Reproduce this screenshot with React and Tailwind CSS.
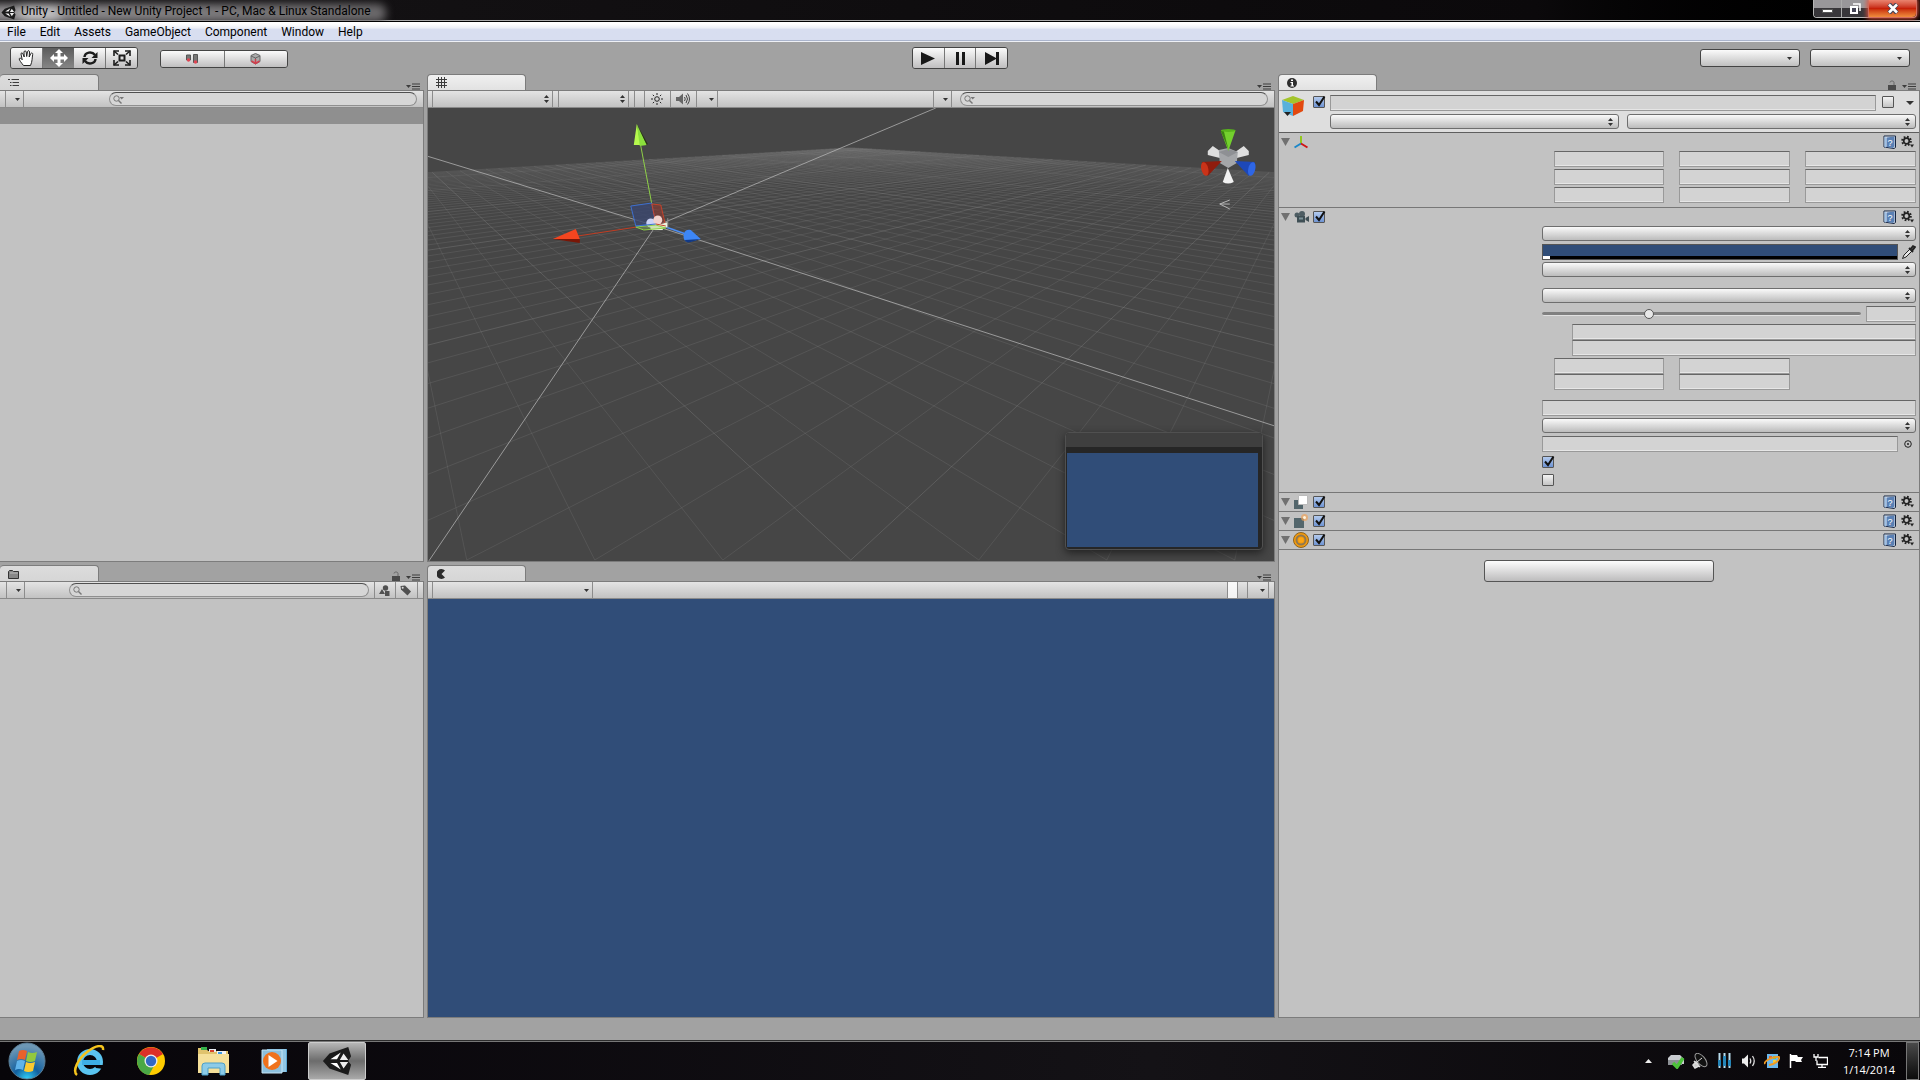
import clsx from "clsx";

const menus = ["File", "Edit", "Assets", "GameObject", "Component", "Window", "Help"];

const dark = "#3c3c3c";

// perspective grid: both families of lines meet on the horizon
const CENTER = 851;
const HORIZON = 120;
const SPREAD = 475;
const FRONT = 560;
const CELL = 128;
const EDGE = 55;

function gridLines() {
  const edgeSlope = (FRONT - HORIZON) / (SPREAD + CELL * EDGE);
  const lines = [];
  for (let k = -3; k <= EDGE; k++) {
    const run = SPREAD + CELL * k;
    const slope = (FRONT - HORIZON) / run;
    // start of the line, on the far edge of the opposite family
    const t = (edgeSlope * 2 * SPREAD) / (slope + edgeSlope);
    lines.push({
      k,
      x1: -SPREAD + t,
      y1: HORIZON + slope * t,
      x2: -SPREAD + run,
      y2: FRONT,
    });
  }
  return lines;
}

function UnityLogo({ size, className }) {
  return (
    <svg width={size} height={size} viewBox="0 0 32 32" className={className} aria-hidden="true">
      <path d="M28 1 8 8 1 16l7 8 20 7 3-11-3-4 3-5z" fill="#1b1b1b" />
      <path d="M9 14 20 7l-4 7z M9 18l11 7-4-7z" fill="#fff" />
      <path d="m23 8-4 7h9z M23 24l-4-7h9z" fill="#eee" />
    </svg>
  );
}

function Caret({ className }) {
  return (
    <svg width="5" height="3" viewBox="0 0 5 3" className={className} aria-hidden="true">
      <path d="M0 0h5L2.500 3z" fill="#333" />
    </svg>
  );
}

function UpDown({ className }) {
  return (
    <svg width="5" height="8" viewBox="0 0 5 8" className={className} aria-hidden="true">
      <path d="M2.500 0 5 3H0zM0 5h5L2.500 8z" fill="#333" />
    </svg>
  );
}

function PanelMenu() {
  return (
    <button type="button" aria-label="Panel menu" className="h-[7px] w-[15px]">
      <svg width="15" height="7" viewBox="0 0 15 7">
        <path d="M0 2h5L2.500 5z" fill={dark} />
        <path d="M6 1h8M6 3.500h8M6 6h8" stroke={dark} />
      </svg>
    </button>
  );
}

function Lock() {
  return (
    <button type="button" aria-label="Lock" className="mr-[6px] h-[10px] w-2">
      <svg width="8" height="10" viewBox="0 0 8 10">
        <path d="M2 2.500C2 .5 6 .5 6 2.500V5" fill="none" stroke="#666" />
        <path d="M0 5h8v5H0z" fill="#4a4a4a" />
      </svg>
    </button>
  );
}

function Cell({ className, children }) {
  return (
    <div className={clsx("flex h-full shrink-0 items-center border-r border-[#8c8c8c]", className)}>
      {children}
    </div>
  );
}

function Strip({ children }) {
  return (
    <div className="flex h-[17px] shrink-0 items-center border-b border-[#8a8a8a] bg-linear-to-b from-[#e4e4e4] to-[#c2c2c2]">
      {children}
    </div>
  );
}

function Search({ label, className, caret }) {
  return (
    <label className={clsx("relative block h-[14px]", className)}>
      <input
        type="search"
        aria-label={label}
        className="block h-[14px] w-full appearance-none rounded-full border border-[#8f8f8f] border-t-[#4f4f4f] bg-[#d6d6d6] pl-4 text-[11px] outline-none"
      />
      <svg width="12" height="9" viewBox="0 0 12 9" className="absolute top-[3px] left-1" aria-hidden="true">
        <circle cx="3.500" cy="3.500" r="2.700" fill="none" stroke="#777" />
        <path d="m5.500 5.500 3 3" stroke="#777" strokeWidth="1.400" />
        {caret && <path d="M6.500 2H11L8.700 4.500z" fill="#777" />}
      </svg>
    </label>
  );
}

function Panel({ name, icon, active, lock, first, className, children }) {
  return (
    <section aria-label={name} className={clsx("flex min-h-0 min-w-0 flex-col", className)}>
      <div className="flex h-4 shrink-0 items-end">
        <button
          type="button"
          aria-label={name}
          className={clsx(
            "flex h-4 w-[99px] items-center rounded-t-[4px] border border-b-0 border-[#7c7c7c] bg-linear-to-b pl-2",
            active ? "from-[#f0f0f0] to-[#e2e2e2]" : "from-[#dcdcdc] to-[#d6d6d6]",
            first && "border-l-0"
          )}
        >
          {icon}
        </button>
        <div className="mr-[3px] ml-auto flex items-end">
          {lock && <Lock />}
          <PanelMenu />
        </div>
      </div>
      <div
        className={clsx(
          "flex min-h-0 flex-1 flex-col border border-[#7c7c7c] bg-[#c2c2c2]",
          first && "border-l-0"
        )}
      >
        {children}
      </div>
    </section>
  );
}

function Popup({ label, className }) {
  return (
    <div className={clsx("relative h-[15px]", className)}>
      <select
        aria-label={label}
        className="block h-[15px] w-full appearance-none rounded-[3px] border border-[#6e6e6e] bg-linear-to-b from-[#fafafa] to-[#bcbcbc]"
      />
      <UpDown className="pointer-events-none absolute top-1 right-[6px]" />
    </div>
  );
}

function Field({ label, className }) {
  return (
    <input
      type="text"
      aria-label={label}
      className={clsx(
        "block h-4 min-w-0 border border-[#999] border-t-[#666] bg-[#d3d3d3] px-1 text-[11px] shadow-[inset_0_-1px_0_#e6e6e6] outline-none",
        className
      )}
    />
  );
}

function Check({ label, checked }) {
  return (
    <label className="relative block size-3 shrink-0">
      <input
        type="checkbox"
        aria-label={label}
        defaultChecked={checked}
        className="peer block size-3 appearance-none rounded-[1px] border border-[#555] bg-linear-to-b from-[#f4f4f4] to-[#c4c4c4] checked:from-[#b4cbee] checked:to-[#6e93d2]"
      />
      <svg viewBox="0 0 12 12" className="pointer-events-none absolute inset-0 hidden size-3 overflow-visible peer-checked:block">
        <path d="m3 5.500 3 3.500L11.500.5" fill="none" stroke="#111" strokeWidth="2" />
      </svg>
    </label>
  );
}

function HeaderTools() {
  return (
    <div className="ml-auto flex items-center gap-1 pr-1">
      <button type="button" aria-label="Help" className="h-[14px] w-[14px]">
        <svg width="14" height="14" viewBox="0 0 14 14">
          <path d="M1 1h11.500v11.500L11 13.500 1 12z" fill="#e8eef6" stroke="#152440" />
          <path d="M3.500 2.500 11.500 1.500v10l-1.500 1.500L3.500 12z" fill="#5a80b4" />
          <path d="M1.500 1.500V12L3 12.500V2.500z" fill="#9fc2e6" />
          <text x="7" y="10.500" textAnchor="middle" fontSize="9" fontFamily="Liberation Sans, sans-serif" fill="#fff">?</text>
        </svg>
      </button>
      <button type="button" aria-label="Component settings" className="h-[14px] w-[14px]">
        <svg width="14" height="14" viewBox="0 0 14 14">
          <circle cx="5.500" cy="6" r="4.300" fill="none" stroke="#222" strokeWidth="2" strokeDasharray="1.700 1.677" />
          <circle cx="5.500" cy="6" r="2.800" fill="none" stroke="#222" strokeWidth="1.700" />
          <path d="M9 9.500h4L11 12.500z" fill="#222" />
        </svg>
      </button>
    </div>
  );
}

function ComponentHeader({ name, icon, toggle = true }) {
  return (
    <div className="flex h-[18px] items-center pl-[2px]">
      <button type="button" aria-label={"Fold " + name} className="w-[9px]">
        <svg width="9" height="8" viewBox="0 0 9 8">
          <path d="M0 0h9L4.500 8z" fill="#707070" />
        </svg>
      </button>
      <span className="ml-[3px] flex w-4 justify-center">{icon}</span>
      <span className="ml-1">{toggle && <Check label={name} checked />}</span>
      <HeaderTools />
    </div>
  );
}

const tools = [
  {
    name: "Hand",
    icon: (
      <svg width="18" height="18" viewBox="0 0 18 18">
        <path
          d="M5.500 16.500C3.500 14 1 11 1.200 9.700c.6-1 2-.4 3 1L3 5c0-1.500 1.500-1.500 2 0L6.200 8 6 3c.2-1.500 2-1.500 2.200 0L8.700 7.500l.8-5c.5-1.300 2-1 2 .5l-.3 5 1.600-3.500c.8-1 2.200-.5 1.900 1C14 9 14.500 12 12.500 16.500z"
          fill="#fff"
          stroke="#222"
        />
      </svg>
    ),
  },
  {
    name: "Move",
    active: true,
    icon: (
      <svg width="18" height="18" viewBox="0 0 18 18">
        <path
          d="m9 0 4 4h-2.500v3.500H14V5l4 4-4 4v-2.500h-3.500V14H13l-4 4-4-4h2.500v-3.500H4V13L0 9l4-4v2.500h3.500V4H5z"
          fill="#fff"
        />
      </svg>
    ),
  },
  {
    name: "Rotate",
    icon: (
      <svg width="16" height="16" viewBox="0 0 16 16">
        <path d="M2.500 7C3 2 10 1 13 5M13.500 9c-.5 5-7.500 6-10.500 2" fill="none" stroke="#1c1c1c" strokeWidth="2.500" />
        <path d="M15.500 2v6H9.500zM.5 14V8h6z" fill="#1c1c1c" />
      </svg>
    ),
  },
  {
    name: "Scale",
    icon: (
      <svg width="18" height="16" viewBox="0 0 18 16">
        <path d="M6.500 5.500h5v5h-5z" fill="none" stroke="#1c1c1c" strokeWidth="2" />
        <path d="M1 6V1h5M12 1h5v5M17 10v5h-5M6 15H1v-5" fill="none" stroke="#1c1c1c" strokeWidth="1.600" />
        <path d="m1 1 4 3.500M17 1l-4 3.500M1 15l4-3.500M17 15l-4-3.500" stroke="#1c1c1c" strokeWidth="1.600" />
      </svg>
    ),
  },
];

const pivots = [
  {
    name: "Pivot",
    icon: (
      <svg width="12" height="10" viewBox="0 0 12 10">
        <path d="M.5 1h4v5h-4zM7.500.5h4v8h-4z" fill="#777" stroke="#555" />
        <circle cx="2.500" cy="6" r="1.700" fill="#e04452" />
        <circle cx="9.500" cy="8" r="1.700" fill="#e04452" />
      </svg>
    ),
  },
  {
    name: "Global",
    icon: (
      <svg width="11" height="12" viewBox="0 0 11 12">
        <path d="m5.500.5 4.500 2v6L5.500 11 1 8.500v-6z" fill="#aaa" stroke="#666" />
        <path d="M1 3l4.500 2L10 3M5.500 5v5" fill="none" stroke="#666" />
        <path d="M5.500 6v4M1.500 8l4 2.500 4-2.500" fill="none" stroke="#d2404e" strokeWidth="1.500" />
      </svg>
    ),
  },
];

const playback = [
  { name: "Play", path: "M1 0 15 6.500 1 13z" },
  { name: "Pause", path: "M4 0h3v13H4zM10 0h3v13h-3z" },
  { name: "Step", path: "M1 0l11 6V0h3v13h-3V7L1 13z" },
];

const group = "flex overflow-hidden rounded-[3px] border border-[#444]";
const segment =
  "flex flex-1 items-center justify-center border-r border-[#777] bg-linear-to-b from-[#fbfbfb] to-[#c0bfc0] last:border-r-0";

function TitleBar() {
  return (
    <header className="relative flex h-[22px] shrink-0 items-start overflow-hidden border-b border-black bg-linear-to-r from-[#151315] via-[#0b090b] via-80% to-black shadow-[inset_0_-1px_0_#aaa]">
      <div className="absolute top-1 -left-2 h-[18px] w-[394px] rounded-r-lg bg-linear-to-r from-[#939193] to-[#6a686a] blur-[4px]" />
      <div className="absolute top-2 left-5 h-3 w-10 bg-white/60 blur-[6px]" />
      <div className="relative flex h-5 items-center">
        <UnityLogo size={15} className="mx-px mt-1" />
        <h1 className="pt-[2px] pl-1 font-[Roboto,sans-serif] text-xs leading-4 font-normal whitespace-nowrap text-black">
          Unity - Untitled - New Unity Project 1 - PC, Mac &amp; Linux Standalone
        </h1>
      </div>
      <div className="relative mr-[3px] ml-auto flex h-[18px] rounded-b-[4px] border border-t-0 border-[#b5b5b5]">
        <button type="button" aria-label="Minimize" className="flex w-7 items-end justify-center rounded-bl-[4px] border-r border-[#aaa] bg-linear-to-b from-[#99979a] from-45% to-[#38363a] to-50% pb-1">
          <span className="h-1 w-[11px] border border-[#555] bg-white" />
        </button>
        <button type="button" aria-label="Restore" className="flex w-[27px] items-center justify-center border-r border-[#aaa] bg-linear-to-b from-[#99979a] from-45% to-[#38363a] to-50%">
          <svg width="12" height="12" viewBox="0 0 12 12">
            <path d="M4 1h7v7" fill="none" stroke="#fff" strokeWidth="1.500" />
            <path d="M2 4h6v6H2z" fill="#445" stroke="#fff" strokeWidth="2" />
          </svg>
        </button>
        <button type="button" aria-label="Close" className="flex w-[47px] items-center justify-center rounded-br-[4px] bg-linear-to-b from-[#e9836f] via-[#c62008] via-50% to-[#f08c3c] shadow-[0_0_5px_2px_#e0513d]">
          <svg width="12" height="11" viewBox="0 0 12 11">
            <path d="m2 1 8 9M10 1 2 10" stroke="#445" strokeWidth="4.500" />
            <path d="m2 1.500 8 8M10 1.500l-8 8" stroke="#fff" strokeWidth="2.600" />
          </svg>
        </button>
      </div>
    </header>
  );
}

function ToolBar() {
  return (
    <div className="grid h-8 shrink-0 grid-cols-[1fr_auto_1fr] items-center px-[10px]">
      <div className="flex items-center gap-[22px]">
        <div className={clsx(group, "h-[22px] w-32")}>
          {tools.map(({ name, icon, active }) => (
            <button
              key={name}
              type="button"
              aria-label={name}
              className={active ? "flex flex-1 items-center justify-center bg-linear-to-b from-[#5c5c5c] to-[#868686]" : segment}
            >
              {icon}
            </button>
          ))}
        </div>
        <div className={clsx(group, "mt-[2px] h-[18px] w-32")}>
          {pivots.map(({ name, icon }) => (
            <button key={name} type="button" aria-label={name} className={segment}>
              {icon}
            </button>
          ))}
        </div>
      </div>
      <div className={clsx(group, "h-[22px] w-24")}>
        {playback.map(({ name, path }) => (
          <button key={name} type="button" aria-label={name} className={segment}>
            <svg width="16" height="13" viewBox="0 0 16 13">
              <path d={path} fill="#181818" />
            </svg>
          </button>
        ))}
      </div>
      <div className="flex justify-end gap-[10px]">
        {["Layers", "Layout"].map((name) => (
          <div key={name} className="relative">
            <select
              aria-label={name}
              className="block h-[18px] w-[100px] appearance-none rounded-[3px] border border-[#444] bg-linear-to-b from-[#fbfbfb] to-[#c0c0c0]"
            />
            <Caret className="pointer-events-none absolute top-2 right-2" />
          </div>
        ))}
      </div>
    </div>
  );
}

function SceneDrawing() {
  const lines = gridLines();
  return (
    <svg viewBox="428 108 847 453" preserveAspectRatio="xMidYMid slice" className="absolute inset-0 size-full" aria-hidden="true">
      <rect x="428" y="108" width="847" height="453" fill="#464646" />
      <g stroke="#8a8a8a">
        {[1, -1].map((side) =>
          lines.map(({ k, x1, y1, x2, y2 }) => (
            <line
              key={side + ":" + k}
              x1={CENTER + side * x1}
              y1={y1}
              x2={CENTER + side * x2}
              y2={y2}
              strokeOpacity={k % 10 === 0 ? 0.34 : 0.22}
            />
          ))
        )}
      </g>
      {/* camera frustum */}
      <path d="M656 226 427 156M656 226 936 108M656 226 1275 426M656 226 429 561" stroke="#bdbdbd" strokeOpacity=".7" fill="none" />
      {/* move gizmo */}
      <path d="M652 204 641 146" stroke="#8fd048" />
      <path d="M637 227 578 236" stroke="#c23d22" />
      <path d="m666 227 20 7" stroke="#4a8df5" strokeWidth="1.500" />
      <path d="M637 124 634 145h7z" fill="#b6f94e" />
      <path d="M637 124 640 146l7-1z" fill="#8be03c" />
      <path d="m637 124 10 21 1-1z" fill="#26360f" />
      <path d="m553 239 23-10 4 10z" fill="#f4451f" />
      <path d="m553 239 27 0v4z" fill="#7a1606" />
      <path d="m701 239-10-9c-3-1-6 0-7 4-1 5 1 8 5 8z" fill="#3d86f6" />
      <path d="m701 239-16 1c1 2 3 3 6 2z" fill="#123a86" />
      <path d="m631 206 21-3 4 21-20 2z" fill="#39466e" fillOpacity=".8" stroke="#3d6fd0" />
      <path d="m652 204 9 1 5 21-10-3z" fill="#8c3830" fillOpacity=".6" stroke="#c6432a" />
      <circle cx="651" cy="223" r="4.500" fill="#ccd3f6" />
      <circle cx="658" cy="220" r="4.500" fill="#f2d3ce" />
      <path d="M650 224h12l6-2v5l-5 1v2h-12z" fill="#eef3e0" />
      <path d="m636 227 8 3 22-2-10-3z" fill="#8fc45a" fillOpacity=".35" stroke="#8fd048" />
      <path d="m636 226 20-2" stroke="#3d6fd0" />
      <path d="m656 224 10 2" stroke="#c6432a" />
      <path d="M668 218v10" stroke="#8b8b8b" />
      {/* orientation gizmo */}
      <path d="m1208 151 5-5 10 7-3 5-12-3zM1249 151l-5-5-10 7 3 5 12-3z" fill="#dedede" />
      <path d="m1219 150 9.500-2 9.500 4-1 11-8.500 5-8.500-5z" fill="#a4a6a9" />
      <path d="m1219 152 9.500 5 9.500-5-9.500-3z" fill="#8e9094" />
      <path d="m1228 168-5 14q5 3 11 0z" fill="#f2f2f2" />
      <path d="M1221 131h14.500l-7 20z" fill="#74d02e" />
      <path d="M1221 131h3l4.500 18z" fill="#3c8412" />
      <ellipse cx="1228.500" cy="130.500" rx="7.500" ry="1.500" fill="#58b41c" />
      <path d="m1222 161-20 1 6 14z" fill="#8f1c0d" />
      <ellipse cx="1205" cy="169" rx="3.500" ry="7" transform="rotate(-14 1205 169)" fill="#c93319" />
      <path d="m1235 161 20 1-6 14z" fill="#1d48b8" />
      <ellipse cx="1252" cy="169" rx="3.500" ry="7" transform="rotate(14 1252 169)" fill="#2e66e6" />
      <path d="m1230 200-10 4 10 5M1220 204h10" fill="none" stroke="#b5b5b5" />
    </svg>
  );
}

function SceneStrip() {
  return (
    <Strip>
      <Cell className="w-[5px]" />
      <Cell className="w-[120px] justify-end pr-[3px]"><UpDown /></Cell>
      <Cell className="w-[6px]" />
      <Cell className="w-[70px] justify-end pr-[3px]"><UpDown /></Cell>
      <Cell className="w-[6px]" />
      <Cell className="w-[10px]" />
      <Cell className="w-[26px] justify-center">
        <button type="button" aria-label="Scene lighting">
          <svg width="12" height="12" viewBox="0 0 12 12">
            <circle cx="6" cy="6" r="2.300" fill="none" stroke="#222" />
            <path d="M6 0v2M6 10v2M0 6h2M10 6h2M1.800 1.800l1.300 1.300M8.900 8.900l1.300 1.300M1.800 10.200l1.300-1.300M8.900 3.100l1.300-1.300" stroke="#222" />
          </svg>
        </button>
      </Cell>
      <Cell className="w-[26px] justify-center">
        <button type="button" aria-label="Scene audio">
          <svg width="14" height="12" viewBox="0 0 14 12">
            <path d="M0 4h3l4-3.500v11L3 8H0z" fill="#666" />
            <path d="M8.500 4q1.500 2 0 4M10 2q3 4 0 8M11.500.5q4 5.500 0 11" fill="none" stroke="#444" />
          </svg>
        </button>
      </Cell>
      <Cell className="w-[21px] justify-end pr-[3px]"><Caret /></Cell>
      <Cell className="flex-1" />
      <Cell className="w-[18px] justify-end pr-[3px]"><Caret /></Cell>
      <Search label="Search scene" caret className="mr-[6px] ml-2 w-[308px]" />
    </Strip>
  );
}

function Row({ className, children }) {
  return <div className={clsx("flex pr-[3px] pl-[41%]", className)}>{children}</div>;
}

function Inspector() {
  return (
    <Panel
      name="Inspector"
      active
      lock
      className="row-span-2"
      icon={
        <svg width="10" height="10" viewBox="0 0 10 10">
          <circle cx="5" cy="5" r="5" fill="#2e2e2e" />
          <path d="M4 1.500h2v1.500H4zM3.500 4H6v3.500h1v1H3.500v-1h1V5h-1z" fill="#fff" />
        </svg>
      }
    >
      <div className="flex h-[42px] border-b border-[#5e5e5e] bg-[#dedede] pt-1 pr-[3px]">
        <svg width="24" height="24" viewBox="0 0 24 24" className="ml-[2px]" aria-hidden="true">
          <path d="m1 5 11-4 11 4-11 4z" fill="#a3c42b" />
          <path d="m1 5 11 4v12L2 17z" fill="#58b1dc" />
          <path d="m23 5-11 4v12l10-5z" fill="#e2490f" />
          <path d="M3 17h7l-3.500 4z" fill="#222" />
        </svg>
        <div className="mt-[1px] ml-2 w-[17px]">
          <Check label="Active" checked />
        </div>
        <div className="flex flex-1 flex-col gap-[3px]">
          <div className="flex items-start">
            <Field label="Name" className="flex-1" />
            <div className="mt-[1px] ml-[6px]"><Check label="Static" /></div>
            <button type="button" aria-label="Static options" className="mt-[6px] mr-[2px] ml-3">
              <svg width="8" height="4" viewBox="0 0 8 4"><path d="M0 0h8L4 4z" fill="#333" /></svg>
            </button>
          </div>
          <div className="flex gap-2">
            <Popup label="Tag" className="flex-1" />
            <Popup label="Layer" className="flex-1" />
          </div>
        </div>
      </div>

      <div className="h-[75px] border-b border-[#777]">
        <ComponentHeader
          name="Transform"
          toggle={false}
          icon={
            <svg width="14" height="13" viewBox="0 0 14 13">
              <path d="M7 8V0" stroke="#92c81e" strokeWidth="2" />
              <path d="m7 7.500-6.500 4" stroke="#1b87c9" strokeWidth="2" />
              <path d="m7 7.500 6.500 4" stroke="#cf1414" strokeWidth="2" />
            </svg>
          }
        />
        <Row>
          <div className="ml-3 grid flex-1 grid-cols-3 gap-x-[15px] gap-y-[2px]">
            {["Position", "Rotation", "Scale"].map((name) =>
              ["X", "Y", "Z"].map((axis) => <Field key={name + axis} label={name + " " + axis} />)
            )}
          </div>
        </Row>
      </div>

      <div className="h-[285px] border-b border-[#777]">
        <ComponentHeader
          name="Camera"
          icon={
            <svg width="15" height="12" viewBox="0 0 15 12">
              <circle cx="3" cy="4" r="2.500" fill="#4e5d63" />
              <circle cx="8" cy="3" r="3" fill="#4e5d63" />
              <path d="M3 5h8v6.500H3zM11.500 7 15 5v6l-3.500-2z" fill="#3f4f55" />
              <path d="M5 6.500h4v2H5z" fill="#7c9299" />
            </svg>
          }
        />
        <Row><Popup label="Clear Flags" className="flex-1" /></Row>
        <Row className="mt-[3px]">
          <button type="button" aria-label="Background colour" className="flex h-4 flex-1 flex-col justify-end border border-[#555] bg-[#304d78]">
            <span className="h-[3px] w-full bg-linear-to-r from-white from-2% to-black to-2%" />
          </button>
          <button type="button" aria-label="Pick colour" className="ml-[3px] w-[15px]">
            <svg width="15" height="16" viewBox="0 0 15 16">
              <path d="M1.500 14.500 3 11l6-6 2 2-6 6z" fill="#e8e8e8" stroke="#222" />
              <path d="m8 4 4 4M9.500 5 12 2l2 1-3 4z" stroke="#222" strokeWidth="1.800" fill="#555" />
            </svg>
          </button>
        </Row>
        <Row className="mt-[2px]"><Popup label="Culling Mask" className="flex-1" /></Row>
        <Row className="mt-[11px]"><Popup label="Projection" className="flex-1" /></Row>
        <Row className="mt-[3px] items-center">
          <input
            type="range"
            aria-label="Field of View"
            min="1"
            max="179"
            defaultValue="60"
            className="mr-[5px] h-4 min-w-0 flex-1 appearance-none bg-transparent [&::-webkit-slider-runnable-track]:h-1 [&::-webkit-slider-runnable-track]:rounded-full [&::-webkit-slider-runnable-track]:border-b [&::-webkit-slider-runnable-track]:border-[#e0e0e0] [&::-webkit-slider-runnable-track]:bg-[#808080] [&::-webkit-slider-thumb]:-mt-[3px] [&::-webkit-slider-thumb]:size-[10px] [&::-webkit-slider-thumb]:appearance-none [&::-webkit-slider-thumb]:rounded-full [&::-webkit-slider-thumb]:border [&::-webkit-slider-thumb]:border-[#555] [&::-webkit-slider-thumb]:bg-[#e8e8e8]"
          />
          <Field label="Field of View value" className="w-[50px]" />
        </Row>
        <Row className="mt-[2px]">
          <div className="ml-[30px] flex flex-1 flex-col">
            <Field label="Near" />
            <Field label="Far" />
          </div>
        </Row>
        <Row className="mt-[2px]">
          <div className="ml-3 grid flex-1 grid-cols-3 gap-x-[15px]">
            <Field label="Viewport X" className="col-start-1" />
            <Field label="Viewport Y" className="col-start-2" />
            <Field label="Viewport W" className="col-start-1" />
            <Field label="Viewport H" className="col-start-2" />
          </div>
        </Row>
        <Row className="mt-[10px]"><Field label="Depth" className="flex-1" /></Row>
        <Row className="mt-[2px]"><Popup label="Rendering Path" className="flex-1" /></Row>
        <Row className="mt-[3px] items-center">
          <Field label="Target Texture" className="flex-1" />
          <button type="button" aria-label="Select texture" className="ml-[3px] flex w-[15px] justify-center">
            <svg width="8" height="8" viewBox="0 0 8 8">
              <circle cx="4" cy="4" r="3.300" fill="none" stroke="#222" />
              <circle cx="4" cy="4" r="1" fill="#222" />
            </svg>
          </button>
        </Row>
        <Row className="mt-1"><Check label="Occlusion Culling" checked /></Row>
        <Row className="mt-[6px]"><Check label="HDR" /></Row>
      </div>

      <div className="border-b border-[#777]">
        <ComponentHeader
          name="GUILayer"
          icon={
            <svg width="14" height="14" viewBox="0 0 14 14">
              <path d="M0 5h9v9H0z" fill="#53666c" />
              <path d="M4.500.5h9v9h-9z" fill="#fff" stroke="#bbb" />
            </svg>
          }
        />
      </div>
      <div className="border-b border-[#777]">
        <ComponentHeader
          name="Flare Layer"
          icon={
            <svg width="14" height="14" viewBox="0 0 14 14">
              <path d="M0 4h10v10H0z" fill="#53666c" />
              <circle cx="10.500" cy="3.500" r="3.500" fill="#f0a45c" fillOpacity=".7" />
              <circle cx="10.500" cy="3.500" r="1.500" fill="#fff6e0" />
            </svg>
          }
        />
      </div>
      <div className="border-b border-[#777]">
        <ComponentHeader
          name="Audio Listener"
          icon={
            <svg width="16" height="16" viewBox="0 0 16 16">
              <circle cx="8" cy="8" r="7.500" fill="#f49a0b" stroke="#8c6420" />
              <circle cx="8" cy="8" r="4.500" fill="#f49a0b" stroke="#8f7850" strokeWidth="2" />
              <circle cx="8" cy="8" r="2.500" fill="#ffa613" />
            </svg>
          }
        />
      </div>
      <button
        type="button"
        aria-label="Add Component"
        className="mx-auto mt-[10px] h-[22px] w-[230px] rounded-[3px] border border-[#555] bg-linear-to-b from-[#fdfdfd] to-[#bdbcbd]"
      />
    </Panel>
  );
}

const apps = [
  {
    name: "Internet Explorer",
    icon: (
      <svg width="32" height="32" viewBox="0 0 32 32">
        <circle cx="17" cy="17" r="10" fill="none" stroke="#5ac4f0" strokeWidth="6" />
        <path d="M9 15h18v5H9z" fill="#3daee6" />
        <path d="M21 20h10v4l-8-1z" fill="#08060a" />
        <path d="M4 30C-1 26 5 14 14 7S31-1 30 5" fill="none" stroke="#f4c31c" strokeWidth="2.500" />
      </svg>
    ),
  },
  {
    name: "Chrome",
    icon: (
      <svg width="28" height="28" viewBox="0 0 28 28">
        <circle cx="14" cy="14" r="14" fill="#fc0" />
        <path d="M14 14 2 7a14 14 0 0 1 24 0z" fill="#dc3027" />
        <path d="M14 14 2 7a14 14 0 0 0 10 21l6-11z" fill="#4aa846" />
        <circle cx="14" cy="14" r="6.500" fill="#eee" />
        <circle cx="14" cy="14" r="5.200" fill="#3369c4" />
      </svg>
    ),
  },
  {
    name: "Explorer",
    icon: (
      <svg width="32" height="30" viewBox="0 0 32 30">
        <path d="M1 2h8l2 3h20v22H1z" fill="#e0c36d" />
        <path d="M4 1h6v3H4z" fill="#35b04a" />
        <path d="M12 3h7v3h-7z" fill="#e9eef5" />
        <path d="M13 4h4v2h-4z" fill="#d8452d" />
        <path d="M20 5h9v3h-9z" fill="#f4f4f4" />
        <path d="M21 6h4v2h-4z" fill="#3d9be6" />
        <path d="M1 8h31v19H1z" fill="#f5e09a" />
        <path d="M5 29V20q0-3 3-3h17q3 0 3 3v9h-5v-7H11v7z" fill="#8ccbe8" stroke="#4c9fc9" />
      </svg>
    ),
  },
  {
    name: "Media Player",
    icon: (
      <svg width="28" height="26" viewBox="0 0 28 26">
        <path d="M6 1h20v23H6z" fill="#5da7d3" />
        <path d="M22 1v23M24 1v23" stroke="#c6e5f5" />
        <path d="M1 2h20v23H1z" fill="#8dc0dd" stroke="#c6e5f5" />
        <circle cx="11" cy="13" r="9" fill="#f0721d" />
        <path d="m7.500 7 9 6-9 6z" fill="#fff" />
      </svg>
    ),
  },
];

const tray = [
  {
    name: "Safely remove",
    icon: (
      <svg width="18" height="16" viewBox="0 0 18 16">
        <path d="m1 5 3-3h9l4 4v5H1z" fill="#c9ccd0" />
        <path d="M1 7h14v5H1z" fill="#8c9095" />
        <path d="m6 10 4 4 6-9" fill="none" stroke="#4cc23a" strokeWidth="3.500" />
      </svg>
    ),
  },
  {
    name: "Satellite",
    icon: (
      <svg width="16" height="16" viewBox="0 0 16 16">
        <ellipse cx="9" cy="7" rx="4" ry="8" transform="rotate(-40 9 7)" fill="#111" stroke="#999" />
        <path d="m2 8 6 6M1 12l3-3 3 4-4 2z" stroke="#ddd" strokeWidth="1.500" fill="#ccc" />
        <path d="m5 9 5-4" stroke="#ddd" />
      </svg>
    ),
  },
  {
    name: "Mixer",
    icon: (
      <svg width="15" height="16" viewBox="0 0 15 16">
        <path d="M2.500 0v15M7.500 0v15M12.500 0v15" stroke="#b8dcec" strokeWidth="2" />
        <path d="M2.500 7v6M7.500 3v10M12.500 7v6" stroke="#2485b8" strokeWidth="3" />
      </svg>
    ),
  },
  {
    name: "Volume",
    icon: (
      <svg width="15" height="14" viewBox="0 0 15 14">
        <path d="M1 4.500h2l4-4v13l-4-4H1z" fill="#eee" />
        <path d="M9 4.500q1.500 2.500 0 5M11.500 2q3.500 5 0 10" fill="none" stroke="#ddd" strokeWidth="1.300" />
      </svg>
    ),
  },
  {
    name: "Updates",
    icon: (
      <svg width="16" height="16" viewBox="0 0 16 16">
        <path d="M3 1h11v14H3z" fill="#6bb8ec" />
        <path d="M5 3h3v3H5z" fill="#e26838" />
        <path d="M9 3h3v3H9z" fill="#8ac44c" />
        <path d="M9 7h3v3H9z" fill="#f4ce3a" />
        <path d="M1 11c-2-3 9-8 14-7 1 3-3 7-10 8" fill="none" stroke="#f09a23" strokeWidth="1.800" />
      </svg>
    ),
  },
  {
    name: "Action Center",
    icon: (
      <svg width="15" height="14" viewBox="0 0 15 14">
        <path d="M1.500 0v14" stroke="#fff" strokeWidth="1.500" />
        <path d="M2 1h6l1 2h5l-2 3 1 2H7L6 7H2z" fill="#fff" />
      </svg>
    ),
  },
  {
    name: "Network",
    icon: (
      <svg width="15" height="14" viewBox="0 0 15 14">
        <path d="M5.500 3.500h9v7H4v-4" fill="none" stroke="#fff" strokeWidth="1.300" />
        <path d="M1 0v3h4V0M3 3v4M9 10v3M5 13.300h8" fill="none" stroke="#fff" strokeWidth="1.300" />
      </svg>
    ),
  },
];

function Taskbar() {
  return (
    <footer className="flex h-10 shrink-0 items-center border-t border-[#2c2c2c] bg-linear-to-r from-[#070509] via-[#141216] via-60% to-[#09070a] shadow-[inset_0_1px_0_#777]">
      <button type="button" aria-label="Start" className="ml-2">
        <svg width="38" height="38" viewBox="0 0 38 38">
          <defs>
            <radialGradient id="orb" cx=".5" cy="1" r=".9">
              <stop offset="0" stopColor="#31d3fb" />
              <stop offset=".4" stopColor="#12609f" />
              <stop offset="1" stopColor="#6d97b5" />
            </radialGradient>
          </defs>
          <circle cx="19" cy="19" r="18" fill="url(#orb)" stroke="#5b7d94" />
          <path d="M11 9q4-2 8 0l-2 9q-4-2-8 0z" fill="#e8622c" />
          <path d="M20 10q4 2 9 0l-2 9q-5 2-9 0z" fill="#93c83e" />
          <path d="M9 19q4-2 8 0l-2 9q-4-2-8 0z" fill="#5fb3ea" />
          <path d="M18 20q4 2 9 0l-2 9q-5 2-9 0z" fill="#fbc92f" />
        </svg>
      </button>
      <div className="ml-3 flex h-full items-center">
        {apps.map(({ name, icon }) => (
          <button key={name} type="button" aria-label={name} className="flex w-[62px] items-center justify-center">
            {icon}
          </button>
        ))}
        <button
          type="button"
          aria-label="Unity"
          className="ml-[2px] flex h-[38px] w-[58px] items-center justify-center rounded-[2px] border border-[#ccc] bg-linear-to-b from-[#b6b6b6] via-[#6c6c6c] via-50% to-[#a9a9a9]"
        >
          <UnityLogo size={30} />
        </button>
      </div>
      <div className="ml-auto flex h-full items-center">
        <button type="button" aria-label="Show hidden icons" className="mr-3">
          <svg width="7" height="4" viewBox="0 0 7 4"><path d="M3.500 0 7 4H0z" fill="#eee" /></svg>
        </button>
        {tray.map(({ name, icon }) => (
          <button key={name} type="button" aria-label={name} className="flex w-6 items-center justify-center">
            {icon}
          </button>
        ))}
        <button type="button" className="w-[74px] text-center text-[11px] leading-[17px] text-white">
          <time className="block">7:14 PM</time>
          <time className="block">1/14/2014</time>
        </button>
        <button
          type="button"
          aria-label="Show desktop"
          className="mr-[1px] h-[38px] w-[13px] border border-[#777] bg-linear-to-b from-[#4a4a4a] to-[#0c0c0c]"
        />
      </div>
    </footer>
  );
}

export default function App() {
  return (
    <div className="flex h-screen flex-col overflow-hidden bg-[#a2a2a2] font-['Open_Sans','Noto_Sans',sans-serif]">
      <TitleBar />
      <nav className="flex h-5 shrink-0 items-center border-b border-[#eef0f6] bg-linear-to-b from-white from-10% via-[#eceff6] via-32% to-[#d8def0] to-38% font-[Roboto,sans-serif] text-xs text-black shadow-[inset_0_-1px_0_#aab4cc]">
        {menus.map((menu) => (
          <button key={menu} type="button" className="px-[7px] leading-4">
            {menu}
          </button>
        ))}
      </nav>
      <ToolBar />

      <main className="grid min-h-0 flex-1 grid-cols-[424fr_849fr_642fr] grid-rows-[488fr_453fr] gap-[3px]">
        <Panel
          name="Hierarchy"
          first
          icon={
            <svg width="11" height="9" viewBox="0 0 11 9">
              <path d="M0 1.500h2M3.500 1.500H11M2 4.500h1.500M4.500 4.500H11M2 7.500h1.500M4.500 7.500H11" stroke={dark} />
            </svg>
          }
        >
          <Strip>
            <Cell className="w-[6px]" />
            <Cell className="w-[18px] justify-end pr-[3px]"><Caret /></Cell>
            <Search label="Search hierarchy" caret className="mr-[6px] ml-[85px] flex-1" />
          </Strip>
          <div className="h-4 bg-[#8f8f8f]" />
        </Panel>

        <Panel
          name="Scene"
          active
          icon={
            <svg width="11" height="11" viewBox="0 0 11 11">
              <path d="M2.500 0v11M5.500 0v11M8.500 0v11M0 2.500h11M0 5.500h11M0 8.500h11" stroke={dark} />
            </svg>
          }
        >
          <SceneStrip />
          <div className="relative flex-1 overflow-hidden">
            <SceneDrawing />
            <figure
              aria-label="Camera Preview"
              className="absolute right-[11px] bottom-[11px] w-[198px] rounded-[4px] border border-[#505050] bg-[#262626] shadow-[0_3px_8px_#222]"
            >
              <div className="h-[14px] rounded-t-[3px] bg-[#3f3f3f]" />
              <div className="mt-[6px] mr-1 mb-[2px] ml-px h-[94px] bg-[#304d78]" />
            </figure>
          </div>
        </Panel>

        <Inspector />

        <Panel
          name="Project"
          first
          lock
          icon={
            <svg width="12" height="10" viewBox="0 0 12 10">
              <path d="M.5 9.500v-7l1-1h3l1 1h5v7z" fill="#888" stroke="#333" />
              <path d="M2 4h8" stroke="#bbb" />
            </svg>
          }
        >
          <Strip>
            <Cell className="w-[7px]" />
            <Cell className="w-[18px] justify-end pr-[3px]"><Caret /></Cell>
            <Search label="Search project" className="mr-[5px] ml-11 flex-1" />
            <Cell className="w-[22px] justify-center border-l">
              <button type="button" aria-label="Search by type">
                <svg width="11" height="11" viewBox="0 0 11 11">
                  <path d="M0 9 3 4l3 5zM6 6h4.500v5H6z" fill="#505050" />
                  <circle cx="6.500" cy="3" r="2.700" fill="#505050" />
                </svg>
              </button>
            </Cell>
            <Cell className="w-[22px] justify-center">
              <button type="button" aria-label="Search by label">
                <svg width="12" height="11" viewBox="0 0 12 11">
                  <path d="M.5 1 5 .5 11 6.500 7.500 10.500 1 4.500z" fill="#505050" />
                  <circle cx="2.700" cy="2.700" r="1" fill="#ddd" />
                </svg>
              </button>
            </Cell>
            <div className="w-[5px]" />
          </Strip>
        </Panel>

        <Panel
          name="Game"
          icon={
            <svg width="9" height="10" viewBox="0 0 9 10" className="ml-px">
              <path d="M8 1.500A5 5 0 1 0 8 8.500L4.500 5z" fill="#2b2b2b" />
            </svg>
          }
        >
          <Strip>
            <Cell className="w-[5px]" />
            <Cell className="w-[160px] justify-end pr-[3px]"><Caret /></Cell>
            <Cell className="flex-1" />
            <Cell className="w-[10px] bg-white/80" />
            <Cell className="w-[10px]" />
            <Cell className="w-[21px] justify-end pr-[3px]"><Caret /></Cell>
            <div className="w-[5px]" />
          </Strip>
          <div className="flex-1 bg-[#304d78]" />
        </Panel>
      </main>

      <div className="h-[22px] shrink-0" />
      <Taskbar />
    </div>
  );
}
